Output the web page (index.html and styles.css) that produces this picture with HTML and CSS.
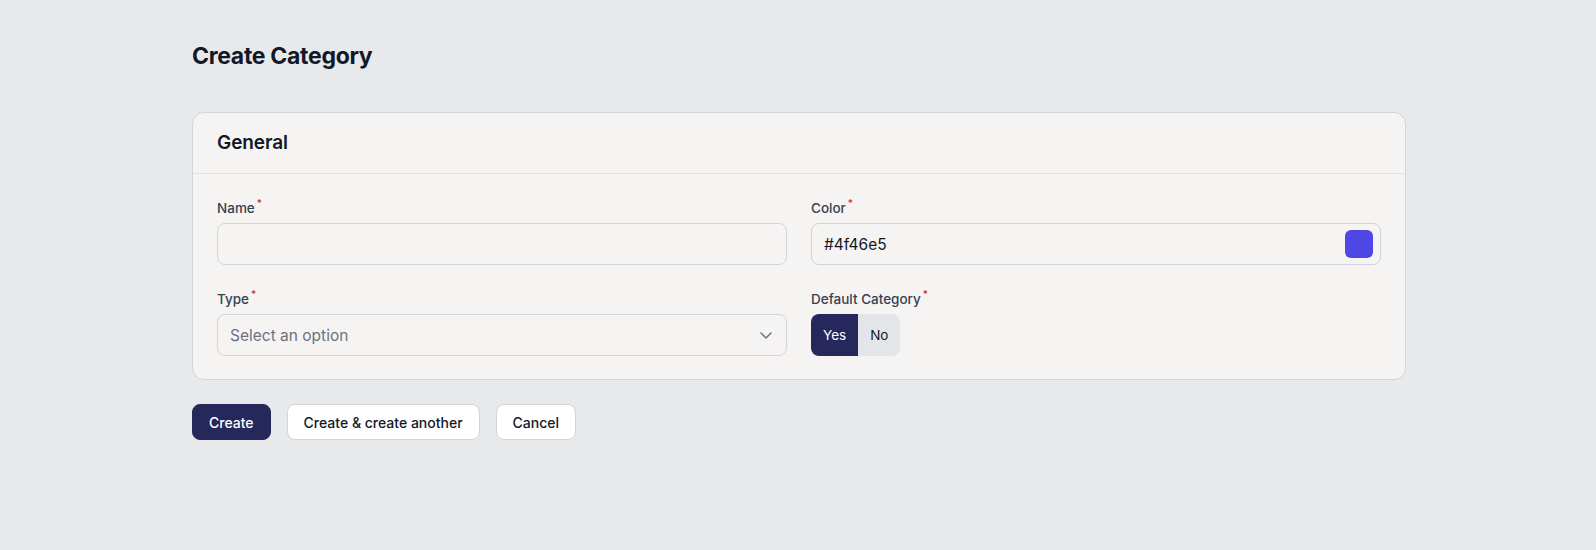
FILE: index.html
```html
<!DOCTYPE html>
<html lang="en">
<head>
  <meta charset="UTF-8" />
  <meta name="viewport" content="width=device-width, initial-scale=1.0" />
  <title>Create Category</title>
  <link rel="stylesheet" href="styles.css">
</head>
<body>
  <main class="page">
    <h1 class="page-title">Create Category</h1>

    <form class="form" onsubmit="return false">
      <section class="card">
        <header class="card-header">
          <h2>General</h2>
        </header>

        <div class="card-body">
          <div class="field">
            <label class="field-label" for="name">Name<sup>*</sup></label>
            <input class="input" id="name" type="text">
          </div>

          <div class="field">
            <label class="field-label" for="color">Color<sup>*</sup></label>
            <div class="input color-input">
              <span class="color-value" id="color">#4f46e5</span>
              <span class="swatch"></span>
            </div>
          </div>

          <div class="field">
            <label class="field-label" for="type">Type<sup>*</sup></label>
            <div class="input select" id="type">
              <span class="placeholder">Select an option</span>
              <svg class="chevron" width="12" height="7" viewBox="0 0 12 7" fill="none">
                <path d="M1 1l5 5 5-5" stroke="#6b7280" stroke-width="1.5" stroke-linecap="round" stroke-linejoin="round"/>
              </svg>
            </div>
          </div>

          <div class="field">
            <label class="field-label">Default Category<sup>*</sup></label>
            <div class="toggle">
              <button type="button" class="toggle-btn active">Yes</button>
              <button type="button" class="toggle-btn">No</button>
            </div>
          </div>
        </div>
      </section>

      <div class="actions">
        <button type="submit" class="btn btn-primary">Create</button>
        <button type="button" class="btn">Create &amp; create another</button>
        <button type="button" class="btn">Cancel</button>
      </div>
    </form>
  </main>
</body>
</html>
```

FILE: styles.css
```css
:root {
  --page-bg: #e8e9eb;
  --card-bg: #f5f4f2;
  --border: #d3d4d9;
  --divider: #e1e2e6;
  --text: #111827;
  --label: #374151;
  --muted: #6b7280;
  --navy: #26275b;
  --danger: #dc2626;
}
* {
  box-sizing: border-box;
}
body {
  margin: 0;
  background-color: var(--page-bg);
  color: var(--text);
  font-family: Inter, "Noto Sans", Arial, sans-serif;
}
.page {
  width: 1214px;
  margin-left: 192px;
  padding-top: 40px;
}
.page-title {
  margin: 0;
  font-size: 23px;
  line-height: 32px;
  font-weight: 700;
  letter-spacing: -0.3px;
}
.form {
  margin-top: 40px;
}
.card {
  background-color: var(--card-bg);
  border: 1px solid var(--border);
  border-radius: 12px;
}
.card-header {
  padding: 16px 24px;
  border-bottom: 1px solid var(--divider);
}
.card-header h2 {
  margin: 0;
  font-size: 19px;
  line-height: 28px;
  font-weight: 600;
  letter-spacing: -0.1px;
}
.card-body {
  display: grid;
  grid-template-columns: 1fr 1fr;
  gap: 24px;
  padding: 24px 24px 23px;
}
.field {
  display: flex;
  flex-direction: column;
  gap: 5px;
}
.field-label {
  font-size: 13.5px;
  line-height: 20px;
  font-weight: 500;
  color: var(--label);
}
.field-label sup {
  color: var(--danger);
  font-size: 10px;
  margin-left: 2px;
  vertical-align: 6px;
  line-height: 0;
}
.input {
  height: 42px;
  width: 100%;
  border: 1px solid var(--border);
  border-radius: 8px;
  background-color: var(--card-bg);
  padding: 0 12px;
  font-family: inherit;
  font-size: 15.5px;
  color: var(--text);
}
.input:focus {
  outline: none;
}
.color-input,
.select {
  display: flex;
  align-items: center;
  justify-content: space-between;
}
.color-input {
  padding-right: 7px;
}
.swatch {
  width: 28px;
  height: 28px;
  border-radius: 6px;
  background-color: #4f46e5;
}
.placeholder {
  color: var(--muted);
}
.chevron {
  margin-right: 2px;
}
.toggle {
  display: flex;
  align-self: flex-start;
  height: 42px;
  border-radius: 8px;
  overflow: hidden;
}
.toggle-btn {
  border: none;
  padding: 0 12px;
  font-family: inherit;
  font-size: 13.5px;
  font-weight: 400;
  background-color: #e4e5e9;
  color: var(--text);
  cursor: pointer;
}
.toggle-btn.active {
  background-color: var(--navy);
  color: #fff;
}
.actions {
  display: flex;
  gap: 16px;
  margin-top: 24px;
}
.btn {
  height: 36px;
  padding: 0 16px;
  border: 1px solid var(--border);
  border-radius: 8px;
  background-color: #fff;
  font-family: inherit;
  font-size: 14px;
  font-weight: 500;
  color: var(--text);
  cursor: pointer;
}
.btn-primary {
  background-color: var(--navy);
  border-color: var(--navy);
  color: #fff;
}
```
